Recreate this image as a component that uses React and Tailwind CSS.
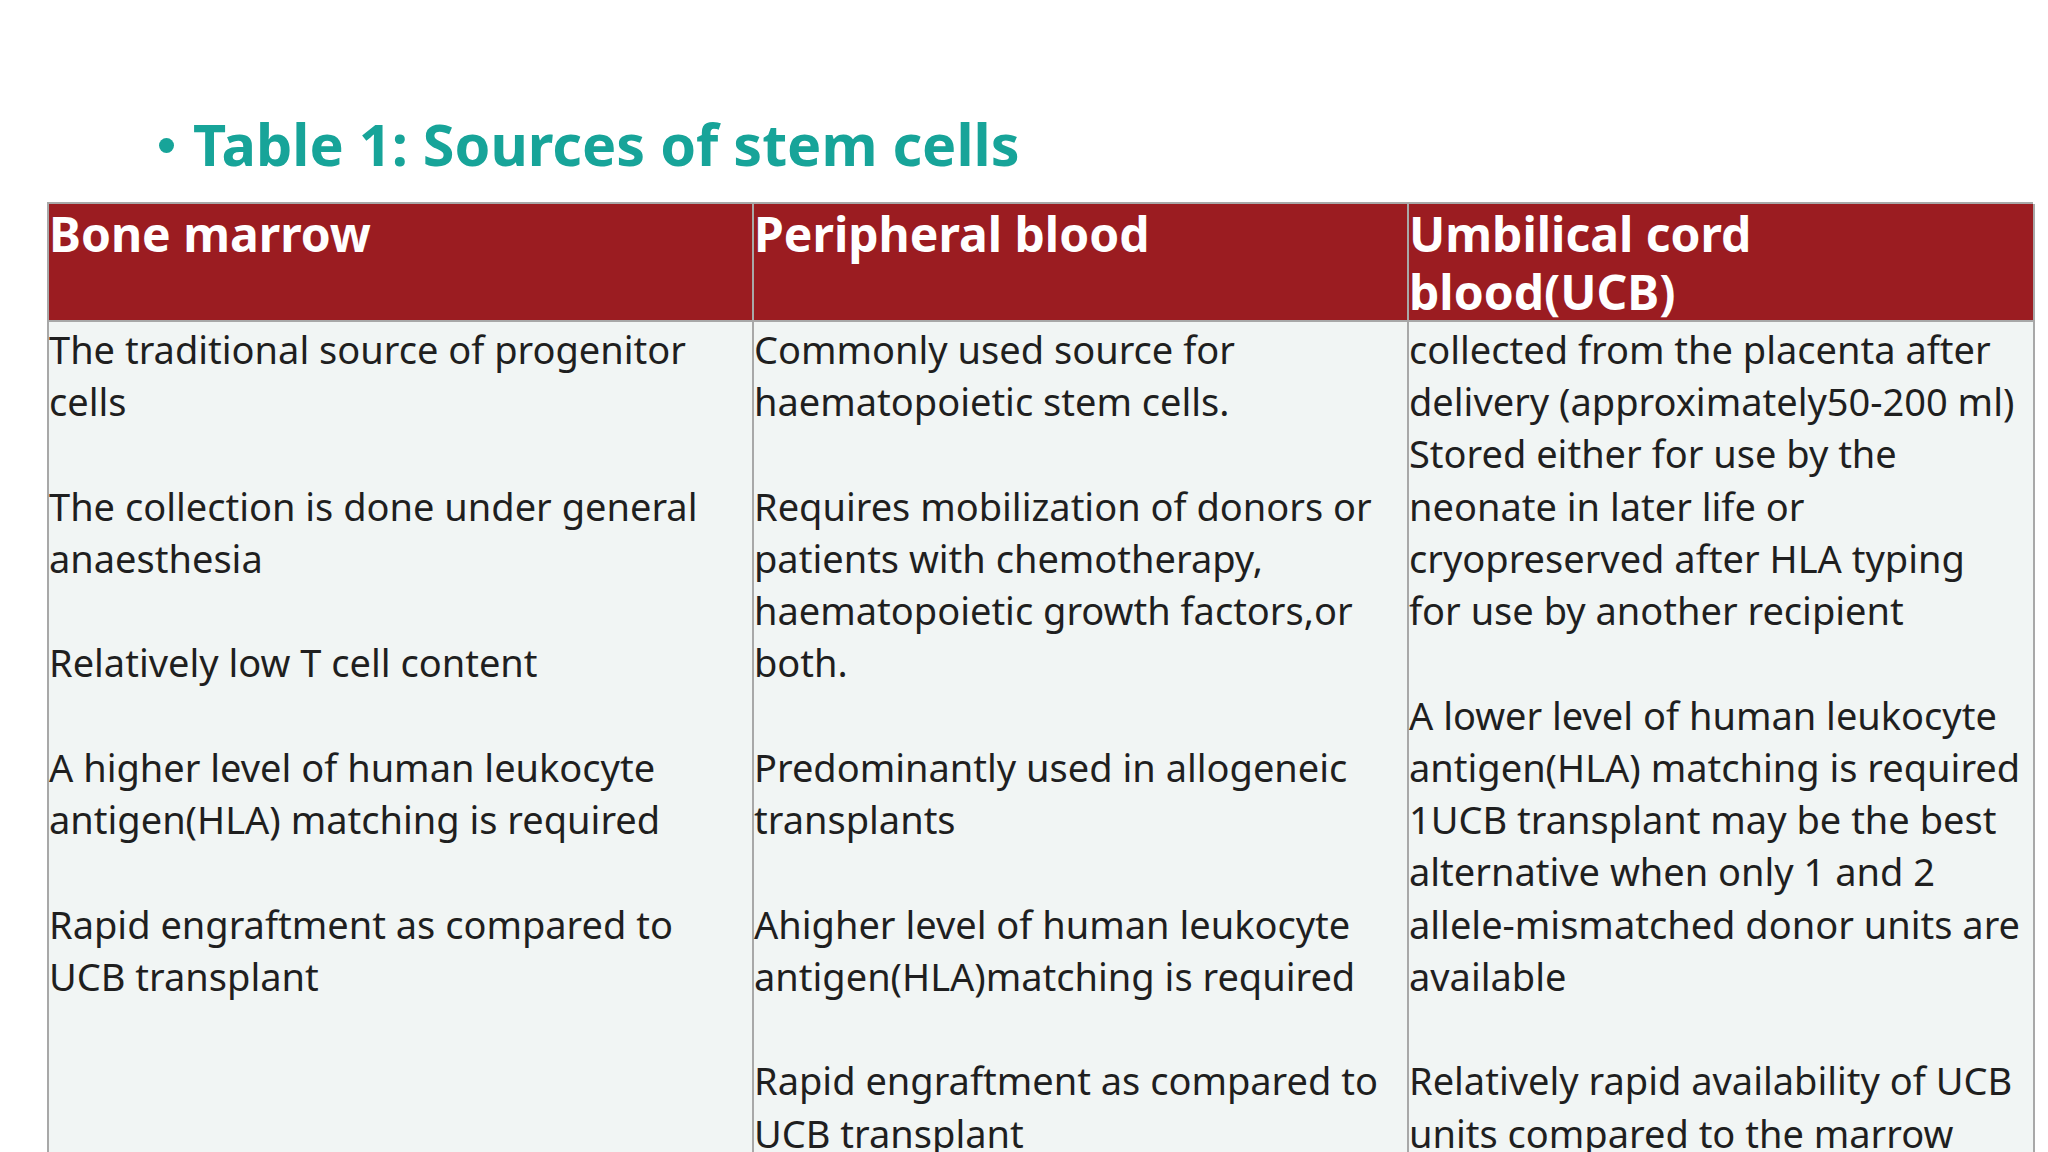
import React from 'react';

const columns = [
  {
    title: ['Bone marrow'],
    lines: [
      'The traditional source of progenitor',
      'cells',
      '',
      'The collection is done under general',
      'anaesthesia',
      '',
      'Relatively low T cell content',
      '',
      'A higher level of human leukocyte',
      'antigen(HLA) matching is required',
      '',
      'Rapid engraftment as compared to',
      'UCB transplant',
      '',
      '',
      '',
    ],
  },
  {
    title: ['Peripheral blood'],
    lines: [
      'Commonly used source for',
      'haematopoietic stem cells.',
      '',
      'Requires mobilization of donors or',
      'patients with chemotherapy,',
      'haematopoietic growth factors,or',
      'both.',
      '',
      'Predominantly used in allogeneic',
      'transplants',
      '',
      'Ahigher level of human leukocyte',
      'antigen(HLA)matching is required',
      '',
      'Rapid engraftment as compared to',
      'UCB transplant',
    ],
  },
  {
    title: ['Umbilical cord', 'blood(UCB)'],
    lines: [
      'collected from the placenta after',
      'delivery (approximately50-200 ml)',
      'Stored either for use by the',
      'neonate in later life or',
      'cryopreserved after HLA typing',
      'for use by another recipient',
      '',
      'A lower level of human leukocyte',
      'antigen(HLA) matching is required',
      '1UCB transplant may be the best',
      'alternative when only 1 and 2',
      'allele-mismatched donor units are',
      'available',
      '',
      'Relatively rapid availability of UCB',
      'units compared to the marrow',
    ],
  },
];

const App = () => {
  return (
    <div className="w-[2048px] h-[1152px] overflow-hidden bg-white font-['Noto_Sans',sans-serif]">
      <div className="pt-[117px] pl-[159px] flex items-center h-[173px]">
        <span className="w-[15px] h-[15px] rounded-full bg-[#17a499] mr-[19px]"></span>
        <h1 className="text-[57.5px] leading-none font-bold text-[#17a499]">
          Table 1: Sources of stem cells
        </h1>
      </div>

      <div className="mt-[29px] ml-[47px] w-[1986px] grid grid-cols-[705px_655px_626px] border-l-2 border-t-2 border-[#a8a8a8]">
        {columns.map((col) => (
          <div
            key={col.title[0]}
            className="h-[118px] bg-[#9b1c21] border-r-2 border-b-2 border-[#a8a8a8] pt-[1px] text-white font-bold text-[48px] leading-[58px]"
          >
            {col.title.map((t) => (
              <div key={t} className="whitespace-nowrap">{t}</div>
            ))}
          </div>
        ))}
        {columns.map((col) => (
          <div
            key={col.title[0] + '-body'}
            className="h-[900px] bg-[#f1f5f4] border-r-2 border-[#a8a8a8] pt-[1px] text-[#1f1f1f] text-[38px] leading-[52.24px]"
          >
            {col.lines.map((line, i) => (
              <div key={i} className="whitespace-nowrap h-[52.24px]">{line}</div>
            ))}
          </div>
        ))}
      </div>
    </div>
  );
};

export default App;
